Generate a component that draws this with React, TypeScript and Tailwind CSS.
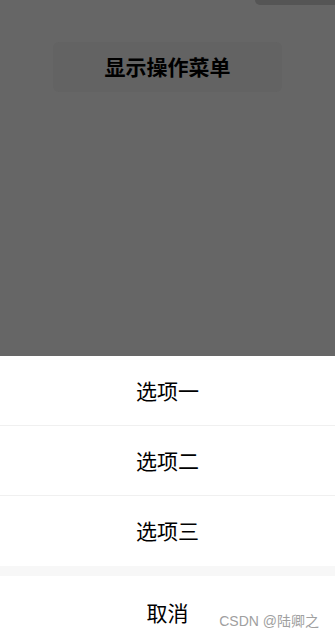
import React from "react";

const options = ["选项一", "选项二", "选项三"];

export default function App() {
  return (
    <div
      className="relative flex h-[641px] w-full flex-col overflow-hidden bg-[#666666]"
      style={{ fontFamily: '"Noto Sans CJK SC", "Liberation Sans", sans-serif' }}
    >
      <div className="flex h-[356px] flex-none flex-col">
        <div className="flex justify-end">
          <div className="h-[5px] w-[80px] rounded-bl-[10px] bg-[#555555]"></div>
        </div>
        <div className="flex justify-center pt-[37px]">
          <button className="flex h-[50px] w-[229px] items-center justify-center rounded-md bg-[#636363] text-[21px] font-bold text-black">
            显示操作菜单
          </button>
        </div>
      </div>

      <div className="flex flex-none flex-col bg-white">
        {options.map((o, i) => (
          <div
            key={o}
            className={`flex h-[70px] items-center justify-center text-[21px] text-black ${i < options.length - 1 ? "border-b border-[#f0f0f0]" : ""}`}
          >
            {o}
          </div>
        ))}
        <div className="h-[10px] bg-[#f7f7f7]"></div>
        <div className="flex h-[74px] items-center justify-center text-[21px] text-black">取消</div>
      </div>

      <div
        className="absolute bottom-[9px] right-[16px] text-[14px] text-[#a0a0a0]"
        style={{ fontFamily: '"Liberation Sans", "Noto Sans CJK SC", sans-serif' }}
      >
        CSDN @陆卿之
      </div>
    </div>
  );
}
